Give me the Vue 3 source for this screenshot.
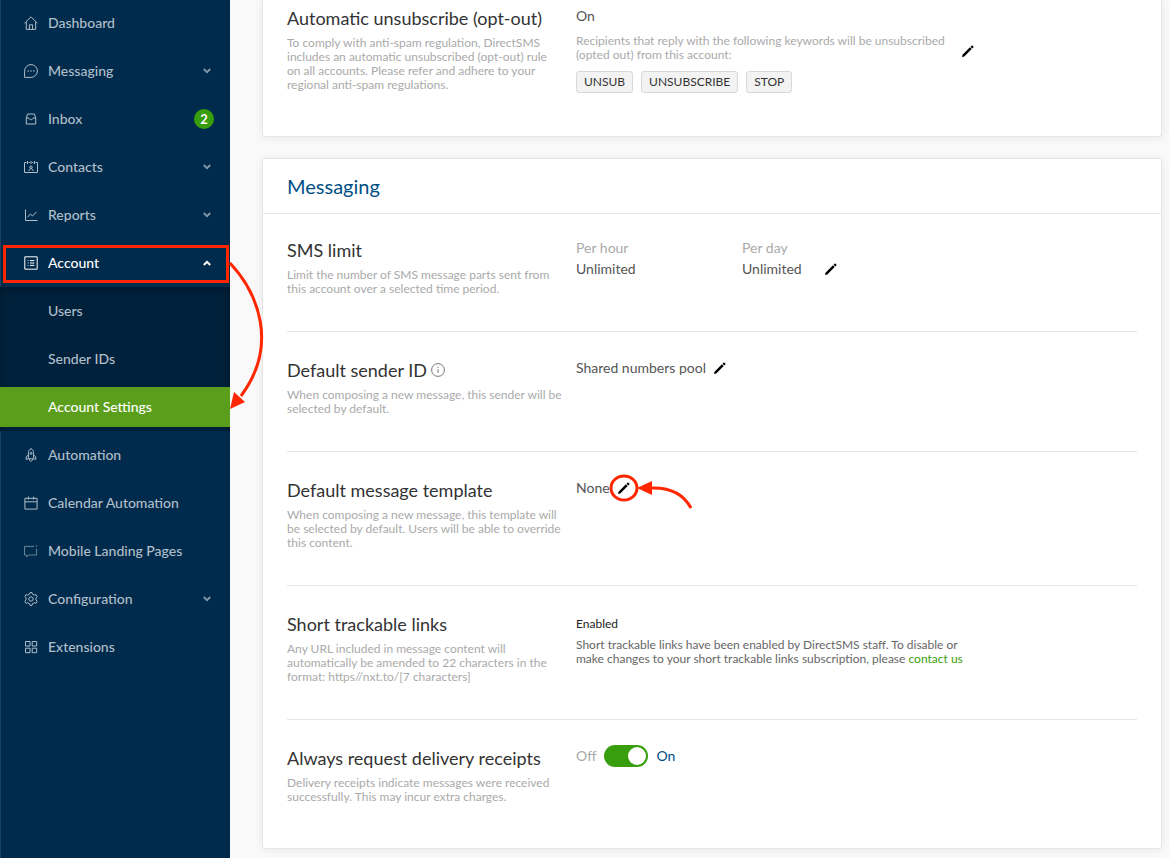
<template>
    <div class="layout">
        <nav class="sidebar" aria-label="Main menu">
            <ul class="menu">
                <template v-for="item in menu" :key="item.label">
                    <li class="menu-item" :class="{ open: item.open }">
                        <a href="#" class="menu-link">
                            <svg class="menu-icon" :class="item.icon" viewBox="0 0 14 14" aria-hidden="true">
                                <path v-for="d in icons[item.icon]" :key="d" :d="d" />
                            </svg>
                            <span class="menu-label">{{ item.label }}</span>
                            <span v-if="item.badge" class="badge">{{ item.badge }}</span>
                            <svg v-if="item.expandable" class="chevron" viewBox="0 0 14 14" aria-hidden="true">
                                <path :d="item.open ? 'M3.8 9 7 5.8 10.2 9' : 'M3.8 5 7 8.2 10.2 5'" />
                            </svg>
                        </a>
                        <template v-if="item.open">
                            <span class="callout-box"></span>
                            <svg class="callout-curve" viewBox="0 0 40 160" aria-hidden="true">
                                <path class="stroke" d="M2 14 C30 44 51 96 13 147" />
                                <path class="head" d="M2 160 6 143 17 153z" />
                            </svg>
                        </template>
                    </li>
                    <li v-if="item.children" class="submenu">
                        <ul class="submenu-list">
                            <li v-for="child in item.children" :key="child">
                                <a href="#" class="menu-link sub" :class="{ active: child === activePage }">
                                    {{ child }}
                                </a>
                            </li>
                        </ul>
                    </li>
                </template>
            </ul>
        </nav>

        <main class="content">
            <section class="card card-continued">
                <div class="row">
                    <div class="row-info">
                        <h3>Automatic unsubscribe (opt-out)</h3>
                        <p class="hint">
                            To comply with anti-spam regulation, DirectSMS includes an automatic
                            unsubscribed (opt-out) rule on all accounts. Please refer and adhere to
                            your regional anti-spam regulations.
                        </p>
                    </div>
                    <div class="row-value centered">
                        <div class="value-text">
                            <div>On</div>
                            <p class="hint keywords-hint">
                                Recipients that reply with the following keywords will be
                                unsubscribed (opted out) from this account:
                            </p>
                            <div class="tags">
                                <span v-for="word in keywords" :key="word" class="tag">{{ word }}</span>
                            </div>
                        </div>
                        <button type="button" class="edit" aria-label="Edit opt-out keywords">
                            <svg viewBox="0 0 14 14"><path :d="pencil" /></svg>
                        </button>
                    </div>
                </div>
            </section>

            <section class="card">
                <h2>Messaging</h2>
                <div class="row">
                    <div class="row-info">
                        <h3>SMS limit</h3>
                        <p class="hint">
                            Limit the number of SMS message parts sent from this account over a
                            selected time period.
                        </p>
                    </div>
                    <dl class="row-value">
                        <div class="limit">
                            <dt>Per hour</dt>
                            <dd>Unlimited</dd>
                        </div>
                        <div class="limit">
                            <dt>Per day</dt>
                            <dd>
                                Unlimited
                                <button type="button" class="edit" aria-label="Edit SMS limit">
                                    <svg viewBox="0 0 14 14"><path :d="pencil" /></svg>
                                </button>
                            </dd>
                        </div>
                    </dl>
                </div>

                <div class="row">
                    <div class="row-info">
                        <h3>
                            Default sender ID
                            <svg class="info" viewBox="0 0 14 14" aria-hidden="true">
                                <circle cx="7" cy="7" r="6.4" />
                                <path d="M7 6.2V10M7 3.8V5" />
                            </svg>
                        </h3>
                        <p class="hint">
                            When composing a new message, this sender will be selected by default.
                        </p>
                    </div>
                    <div class="row-value">
                        <span>Shared numbers pool</span>
                        <button type="button" class="edit spaced" aria-label="Edit default sender ID">
                            <svg viewBox="0 0 14 14"><path :d="pencil" /></svg>
                        </button>
                    </div>
                </div>

                <div class="row">
                    <div class="row-info">
                        <h3>Default message template</h3>
                        <p class="hint">
                            When composing a new message, this template will be selected by default.
                            Users will be able to override this content.
                        </p>
                    </div>
                    <div class="row-value">
                        <span>None</span>
                        <button type="button" class="edit spaced" aria-label="Edit default message template">
                            <svg viewBox="0 0 14 14"><path :d="pencil" /></svg>
                            <svg class="callout-ring" viewBox="0 0 84 36" aria-hidden="true">
                                <ellipse class="stroke" cx="15" cy="14" rx="13" ry="12" />
                                <path class="stroke" d="M41 14 C60 13 74 19 82 34" />
                                <path class="head" d="M28 14 43 7V21z" />
                            </svg>
                        </button>
                    </div>
                </div>

                <div class="row">
                    <div class="row-info">
                        <h3>Short trackable links</h3>
                        <p class="hint">
                            Any URL included in message content will automatically be amended to 22
                            characters in the format: https//nxt.to/[7 characters]
                        </p>
                    </div>
                    <div class="row-value">
                        <div class="value-text wide">
                            <div class="status">Enabled</div>
                            <p class="note">
                                Short trackable links have been enabled by DirectSMS staff. To
                                disable or make changes to your short trackable links subscription,
                                please <a href="#">contact us</a>
                            </p>
                        </div>
                    </div>
                </div>

                <div class="row">
                    <div class="row-info">
                        <h3 id="receipts-title">Always request delivery receipts</h3>
                        <p class="hint">
                            Delivery receipts indicate messages were received successfully. This may
                            incur extra charges.
                        </p>
                    </div>
                    <div class="row-value">
                        <label class="toggle">
                            <span :class="receipts ? 'toggle-off' : 'toggle-on'">Off</span>
                            <input v-model="receipts" type="checkbox" role="switch" aria-labelledby="receipts-title">
                            <span :class="receipts ? 'toggle-on' : 'toggle-off'">On</span>
                        </label>
                    </div>
                </div>
            </section>
        </main>
    </div>
</template>

<script setup>
import { ref } from 'vue';

const receipts = ref(true);
const activePage = 'Account Settings';
const keywords = ['UNSUB', 'UNSUBSCRIBE', 'STOP'];

const menu = [
    { label: 'Dashboard', icon: 'home' },
    { label: 'Messaging', icon: 'message', expandable: true },
    { label: 'Inbox', icon: 'inbox', badge: 2 },
    { label: 'Contacts', icon: 'contacts', expandable: true },
    { label: 'Reports', icon: 'chart', expandable: true },
    {
        label: 'Account',
        icon: 'list',
        expandable: true,
        open: true,
        children: ['Users', 'Sender IDs', 'Account Settings'],
    },
    { label: 'Automation', icon: 'rocket' },
    { label: 'Calendar Automation', icon: 'calendar' },
    { label: 'Mobile Landing Pages', icon: 'bubble' },
    { label: 'Configuration', icon: 'gear', expandable: true },
    { label: 'Extensions', icon: 'grid' },
];

const icons = {
    home: ['M.6 7.2 7 .8l6.4 6.4', 'M2.3 6v7.4h9.4V6', 'M5.4 13.2V8.8h3.2v4.4'],
    message: [
        'M.6 13.4V7A6.4 6.4 0 1 1 7 13.4z',
        'M3.4 7h1.6M6.2 7h1.6M9 7h1.6',
    ],
    inbox: ['M2.3 6 3.6 2h6.8l1.3 4v6H2.3z', 'M2.3 6h2.5c.4 2.2 4 2.2 4.4 0h2.5'],
    contacts: [
        'M2.4 2.5H.5v10h13v-10h-1.9M4.6 2.5h1.2M8.2 2.5h1.2',
        'M3.5 1v3M7 1v3M10.5 1v3',
        'M7 6a1.2 1.2 0 1 1 0 2.4A1.2 1.2 0 0 1 7 6M4.9 11c.2-3.2 4-3.2 4.2 0',
    ],
    chart: ['M1.5 1.5v11h12', 'M3.5 9.2 6.3 6l2.2 2 4-4.2'],
    list: ['M.8.8h12.4v12.4H.8z', 'M3.7 4.6h.8M3.7 7h.8M3.7 9.4h.8M6 4.6h4.4M6 7h4.4M6 9.4h4.4'],
    rocket: [
        'M4.4 10.8V4.6C4.6 2.8 5.5 1.4 7 .6c1.5.8 2.4 2.2 2.6 4v6.2z',
        'M4.4 6.8 2.2 9v2.4l2.2-.6M9.6 6.8 11.8 9v2.4l-2.2-.6',
        'M7 4.4a1 1 0 1 1 0 2 1 1 0 0 1 0-2M5.5 11c0 1.3.6 2 1.5 2.5.9-.5 1.5-1.2 1.5-2.5',
    ],
    calendar: ['M.9 2.3h12.2v10.8H.9z', 'M1 5.8h12M4.4.6v3M9.6.6v3'],
    bubble: ['M10.2 2.4H.5v8.6h2.2v2l2.2-2h7.7V4.6', 'M12.4 1.2v1.6'],
    gear: [
        'M5.5 2.2 6 .6h2l.5 1.6 1.6.9 1.8-.5 1.2 1.8L12 5.9v1.9l1.1 1.5-1.2 2-1.8-.5-1.6.9-.5 1.7H6l-.5-1.7-1.6-.9-1.8.5-1.2-2L2 7.8V5.9L.9 4.4l1.2-1.8 1.8.5z',
        'M7 4.8a2.2 2.2 0 1 1 0 4.4 2.2 2.2 0 0 1 0-4.4',
    ],
    grid: ['M1.5 1.5H6V6H1.5zM8.2 1.5h4.5V6H8.2zM1.5 8.2H6v4.5H1.5zM8.2 8.2h4.5v4.5H8.2z'],
};

const pencil = 'M1 13l.5-2.3 7.4-7.4 1.8 1.8-7.4 7.4zM9.5 2.7l1-1c.4-.4.7-.4 1 0l.8.8c.4.4.4.7 0 1l-1 1z';
</script>

<style>
body {
    margin: 0;
    background: #f9f9f9;
}
</style>

<style scoped>
.layout {
    display: grid;
    grid-template-columns: 230px minmax(0, 1fr);
    min-height: 100vh;
    font-family: Lato, "Liberation Sans", sans-serif;
    font-size: 14px;
    line-height: 16px;
    color: #555;
}

ul {
    list-style: none;
    margin: 0;
    padding: 0;
}

.sidebar {
    background: #002b4c;
    box-shadow: inset 1px 0 #1a405e;
}

.menu {
    display: flex;
    flex-direction: column;
    gap: 8px;
    padding-top: 3px;
}

.menu-item {
    position: relative;
}

.menu-link {
    display: flex;
    align-items: center;
    gap: 10px;
    box-sizing: border-box;
    height: 40px;
    padding: 0 16px 0 24px;
    color: #b0bec9;
    font-weight: 500;
    text-decoration: none;
}

.menu-link.sub {
    padding-left: 48px;
}

.menu-link.active {
    background: #5a9e1c;
    color: #fff;
}

.open .menu-link {
    color: #fff;
}

.menu-icon {
    flex: none;
    width: 14px;
    height: 14px;
    fill: none;
    stroke: currentColor;
    stroke-width: 1;
}

.menu-icon.bubble {
    opacity: 0.6;
}

.menu-label {
    flex: 1;
}

.badge {
    width: 20px;
    height: 20px;
    border-radius: 50%;
    background: #389e0d;
    color: #fff;
    font-size: 13px;
    font-weight: 700;
    line-height: 20px;
    text-align: center;
}

.chevron {
    width: 14px;
    height: 14px;
    fill: none;
    stroke: #8095a6;
    stroke-width: 2;
}

.open .chevron {
    stroke: #fff;
}

.submenu {
    margin: -4px 0;
    padding: 4px 0;
    background: #00213b;
    box-shadow: inset 0 2px 8px rgba(0, 0, 0, 0.3);
}

.submenu-list {
    display: flex;
    flex-direction: column;
    gap: 8px;
}

.content {
    display: flex;
    flex-direction: column;
    gap: 21px;
    padding: 0 8px 9px 32px;
}

.card {
    padding-bottom: 9px;
    border: 1px solid #e6e6e6;
    border-radius: 3px;
    background: #fff;
    box-shadow: 0 1px 8px rgba(0, 0, 0, 0.07);
}

.card-continued {
    padding-bottom: 8px;
    border-top: 0;
    border-radius: 0 0 3px 3px;
}

h2 {
    margin: 0;
    padding: 0 24px;
    border-bottom: 1px solid #e6e6e6;
    color: #004f86;
    font-size: 20px;
    font-weight: 400;
    line-height: 54px;
}

h3 {
    display: flex;
    align-items: center;
    gap: 4px;
    margin: 0 0 8px;
    color: #333;
    font-size: 18px;
    font-weight: 400;
    line-height: 20px;
    white-space: nowrap;
}

.row {
    display: flex;
    margin: 0 24px;
    padding: 28px 0 35px;
}

.row + .row {
    border-top: 1px solid #e6e6e6;
}

h2 + .row {
    padding-top: 26px;
}

.card-continued .row {
    padding-top: 8px;
}

.row-info {
    box-sizing: border-box;
    flex: 0 0 34%;
    padding-right: 13px;
}

.hint,
.note {
    margin: 0;
    color: #aaa;
    font-size: 12px;
    line-height: 14px;
}

.row-value {
    display: flex;
    align-items: flex-start;
    flex: 1;
    min-width: 0;
    margin: 0;
}

.row-value.centered {
    align-items: center;
}

.value-text {
    flex: 0 1 385px;
}

.value-text.wide {
    flex-basis: 400px;
}

.keywords-hint {
    margin: 10px 0 9px;
}

.tags {
    display: flex;
    gap: 8px;
}

.tag {
    padding: 0 7px;
    border: 1px solid #d9d9d9;
    border-radius: 3px;
    background: #f3f3f3;
    color: #333;
    font-size: 12px;
    line-height: 20px;
}

.edit {
    position: relative;
    flex: none;
    width: 14px;
    height: 16px;
    padding: 0;
    border: 0;
    background: none;
    cursor: pointer;
}

.edit svg {
    display: block;
    width: 14px;
    height: 14px;
}

.edit.spaced {
    margin-left: 7px;
}

.limit {
    width: 166px;
}

dt {
    margin-bottom: 5px;
    color: #aaa;
}

dd {
    display: flex;
    gap: 22px;
    margin: 0;
}

.info {
    width: 14px;
    height: 14px;
    fill: none;
    stroke: #777;
    stroke-width: 1;
}

.status {
    margin-bottom: 4px;
    color: #222;
    font-size: 12px;
    line-height: 20px;
}

.note {
    max-width: 388px;
    color: #666;
}

.note a {
    color: #389e0d;
    text-decoration: none;
}

.toggle {
    display: flex;
    align-items: center;
    gap: 8px;
    height: 16px;
}

.toggle input {
    flex: none;
    appearance: none;
    width: 44px;
    height: 22px;
    margin: 0;
    padding: 2px;
    border-radius: 11px;
    background: #8c8c8c;
}

.toggle input::before {
    content: "";
    display: block;
    width: 18px;
    height: 18px;
    border-radius: 50%;
    background: #fff;
}

.toggle input:checked {
    background: #389e0d;
}

.toggle input:checked::before {
    margin-left: auto;
}

.toggle-off {
    color: #aaa;
}

.toggle-on {
    color: #004f86;
}

/* red callouts drawn over the page */
.callout-box {
    position: absolute;
    inset: 2px 1px 0 3px;
    border: 3px solid #ff2600;
    pointer-events: none;
}

.callout-curve {
    position: absolute;
    top: 6px;
    left: 228px;
    z-index: 1;
    width: 40px;
    height: 160px;
    overflow: visible;
    pointer-events: none;
}

.edit .callout-ring {
    position: absolute;
    top: -6px;
    left: -8px;
    width: 84px;
    height: 36px;
    pointer-events: none;
}

.stroke {
    fill: none;
    stroke: #ff2600;
    stroke-width: 3;
}

.head {
    fill: #ff2600;
}
</style>
